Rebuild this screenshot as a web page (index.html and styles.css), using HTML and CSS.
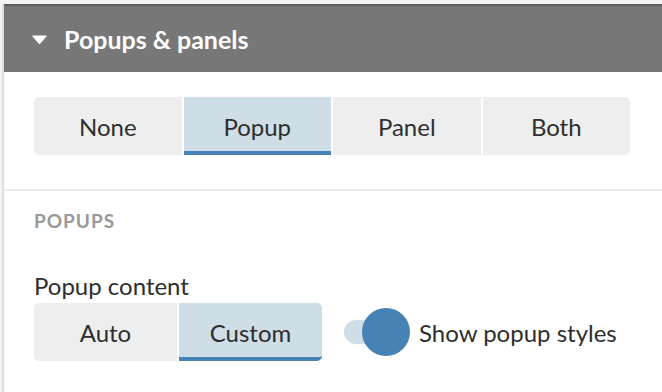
FILE: index.html
```html
<!DOCTYPE html>
<html>
<head>
<meta charset="utf-8">
<link rel="stylesheet" href="styles.css">
</head>
<body>
<div class="page">
  <div class="panel">
    <div class="header">
      <svg class="caret" width="15" height="9" viewBox="0 0 15 9"><path d="M1 1 L14 1 L7.5 8.5 Z" fill="#fff" stroke="#fff" stroke-width="1.2" stroke-linejoin="round"/></svg>
      <span class="title">Popups &amp; panels</span>
    </div>
    <div class="section top">
      <div class="seg seg4">
        <div class="btn">None</div>
        <div class="btn active">Popup</div>
        <div class="btn">Panel</div>
        <div class="btn">Both</div>
      </div>
    </div>
    <div class="section second">
      <div class="label">POPUPS</div>
      <div class="field">Popup content</div>
      <div class="row">
        <div class="seg seg2">
          <div class="btn">Auto</div>
          <div class="btn active">Custom</div>
        </div>
        <div class="toggle">
          <div class="track"></div>
          <div class="knob"></div>
        </div>
        <span class="toggle-text">Show popup styles</span>
      </div>
    </div>
  </div>
</div>
</body>
</html>
```

FILE: styles.css
```css
html, body {
  margin: 0;
  padding: 0;
  background: #f3f3f3;
  font-family: Lato, "Noto Sans", sans-serif;
  color: #333;
}
.page {
  padding-top: 4px;
  padding-left: 2px;
  height: 388px;
}
.panel {
  background: #fff;
  border-left: 2px solid #dedede;
  height: 388px;
}
.header {
  background: #777;
  border-top: 2px solid #5e5e5e;
  height: 66px;
  display: flex;
  align-items: center;
  padding-left: 28px;
}
.caret {
  margin-right: 17px;
  margin-top: 1px;
}
.title {
  color: #fff;
  font-weight: 700;
  font-size: 25px;
}
.section.top {
  padding: 25px 32px 34px 30px;
  border-bottom: 2px solid #ebebeb;
}
.seg {
  display: flex;
  gap: 2px;
}
.seg4 .btn { flex: 1; }
.btn {
  height: 58px;
  box-sizing: border-box;
  background: #eee;
  display: flex;
  align-items: center;
  justify-content: center;
  font-size: 24px;
  color: #2e2e2e;
}
.btn:first-child { border-radius: 5px 0 0 5px; }
.btn:last-child { border-radius: 0 5px 5px 0; }
.btn.active {
  background: #cfdde6;
  border-bottom: 4px solid #4682b4;
  padding-top: 4px;
}
.section.second {
  padding: 18px 32px 0 30px;
}
.label {
  font-size: 19px;
  font-weight: 700;
  color: #999;
  letter-spacing: 1px;
  line-height: 24px;
}
.field {
  font-size: 24px;
  margin-top: 40px;
  margin-bottom: 4px;
  line-height: 26px;
  color: #2e2e2e;
}
.row {
  display: flex;
  align-items: center;
}
.seg2 .btn { width: 143px; }
.toggle {
  position: relative;
  width: 66px;
  height: 48px;
  margin-left: 22px;
  margin-right: 9px;
}
.track {
  position: absolute;
  left: 0;
  top: 12px;
  width: 48px;
  height: 24px;
  border-radius: 12px;
  background: #cfdde6;
}
.knob {
  position: absolute;
  left: 18px;
  top: 0;
  width: 48px;
  height: 48px;
  border-radius: 50%;
  background: #4682b4;
}
.toggle-text {
  font-size: 24px;
  color: #2e2e2e;
}
```
